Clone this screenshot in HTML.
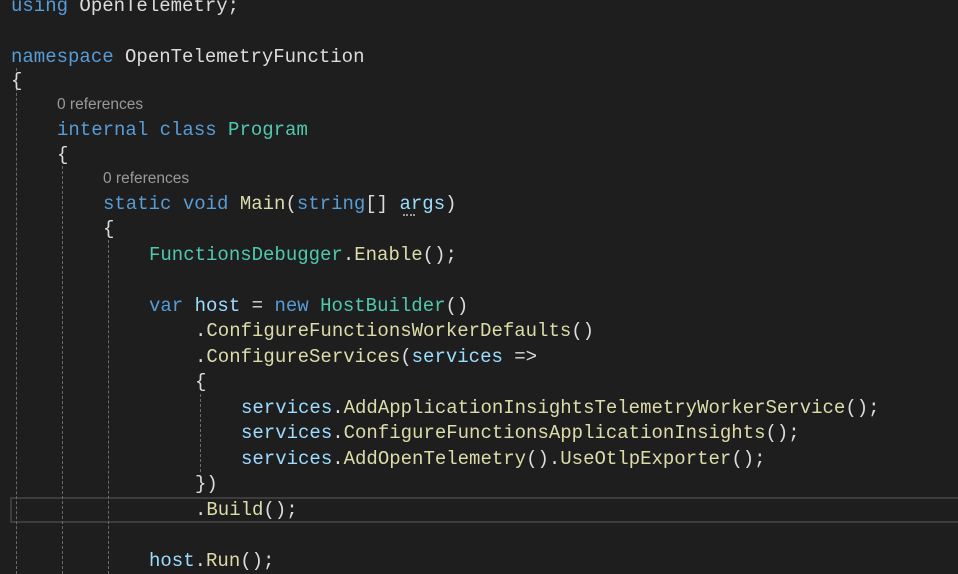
<!DOCTYPE html>
<html><head><meta charset="utf-8"><style>
html,body{margin:0;padding:0;background:#1e1e1e;width:958px;height:574px;overflow:hidden;position:relative}
.l{position:absolute;height:25px;line-height:25px;font-family:"Liberation Mono",monospace;font-size:19px;color:#dcdcdc;white-space:pre}
.lens{position:absolute;height:20px;line-height:20px;font-family:"Liberation Sans",sans-serif;font-size:15.5px;color:#999;white-space:pre}
.k{color:#569cd6}.t{color:#4ec9b0}.m{color:#dcdcaa}.v{color:#9cdcfe}
.g{position:absolute;width:0;border-left:1px dashed #6a6a6a}
.cur{position:absolute;left:10px;top:497px;width:960px;height:22px;border:2px solid #3c3c3c;border-right:none}
</style></head><body>
<div class="cur"></div>
<div class="g" style="left:16px;top:68px;height:506px"></div>
<div class="g" style="left:62px;top:166px;height:408px"></div>
<div class="g" style="left:108px;top:240px;height:334px"></div>
<div class="g" style="left:200px;top:394px;height:78px"></div>
<div class="l" style="left:11px;top:-6px"><span class="k">using</span> OpenTelemetry;</div>
<div class="l" style="left:11px;top:45px"><span class="k">namespace</span> OpenTelemetryFunction</div>
<div class="l" style="left:11px;top:69px">{</div>
<div class="lens" style="left:57px;top:95px">0 references</div>
<div class="l" style="left:57px;top:118px"><span class="k">internal</span> <span class="k">class</span> <span class="t">Program</span></div>
<div class="l" style="left:57px;top:143px">{</div>
<div class="lens" style="left:103px;top:169px">0 references</div>
<div class="l" style="left:103px;top:192px"><span class="k">static</span> <span class="k">void</span> <span class="m">Main</span>(<span class="k">string</span>[] <span class="v">args</span>)</div>
<div class="l" style="left:103px;top:217px">{</div>
<div class="l" style="left:149px;top:243px"><span class="t">FunctionsDebugger</span>.<span class="m">Enable</span>();</div>
<div class="l" style="left:149px;top:294px"><span class="k">var</span> <span class="v">host</span> = <span class="k">new</span> <span class="t">HostBuilder</span>()</div>
<div class="l" style="left:195px;top:319px">.<span class="m">ConfigureFunctionsWorkerDefaults</span>()</div>
<div class="l" style="left:195px;top:345px">.<span class="m">ConfigureServices</span>(<span class="v">services</span> =&gt;</div>
<div class="l" style="left:195px;top:370px">{</div>
<div class="l" style="left:241px;top:396px"><span class="v">services</span>.<span class="m">AddApplicationInsightsTelemetryWorkerService</span>();</div>
<div class="l" style="left:241px;top:421px"><span class="v">services</span>.<span class="m">ConfigureFunctionsApplicationInsights</span>();</div>
<div class="l" style="left:241px;top:447px"><span class="v">services</span>.<span class="m">AddOpenTelemetry</span>().<span class="m">UseOtlpExporter</span>();</div>
<div class="l" style="left:195px;top:472px">})</div>
<div class="l" style="left:195px;top:498px">.<span class="m">Build</span>();</div>
<div class="l" style="left:149px;top:549px"><span class="v">host</span>.<span class="m">Run</span>();</div>
<div style="position:absolute;left:403px;top:214px;width:12px;border-top:2px dotted #999"></div>
</body></html>
